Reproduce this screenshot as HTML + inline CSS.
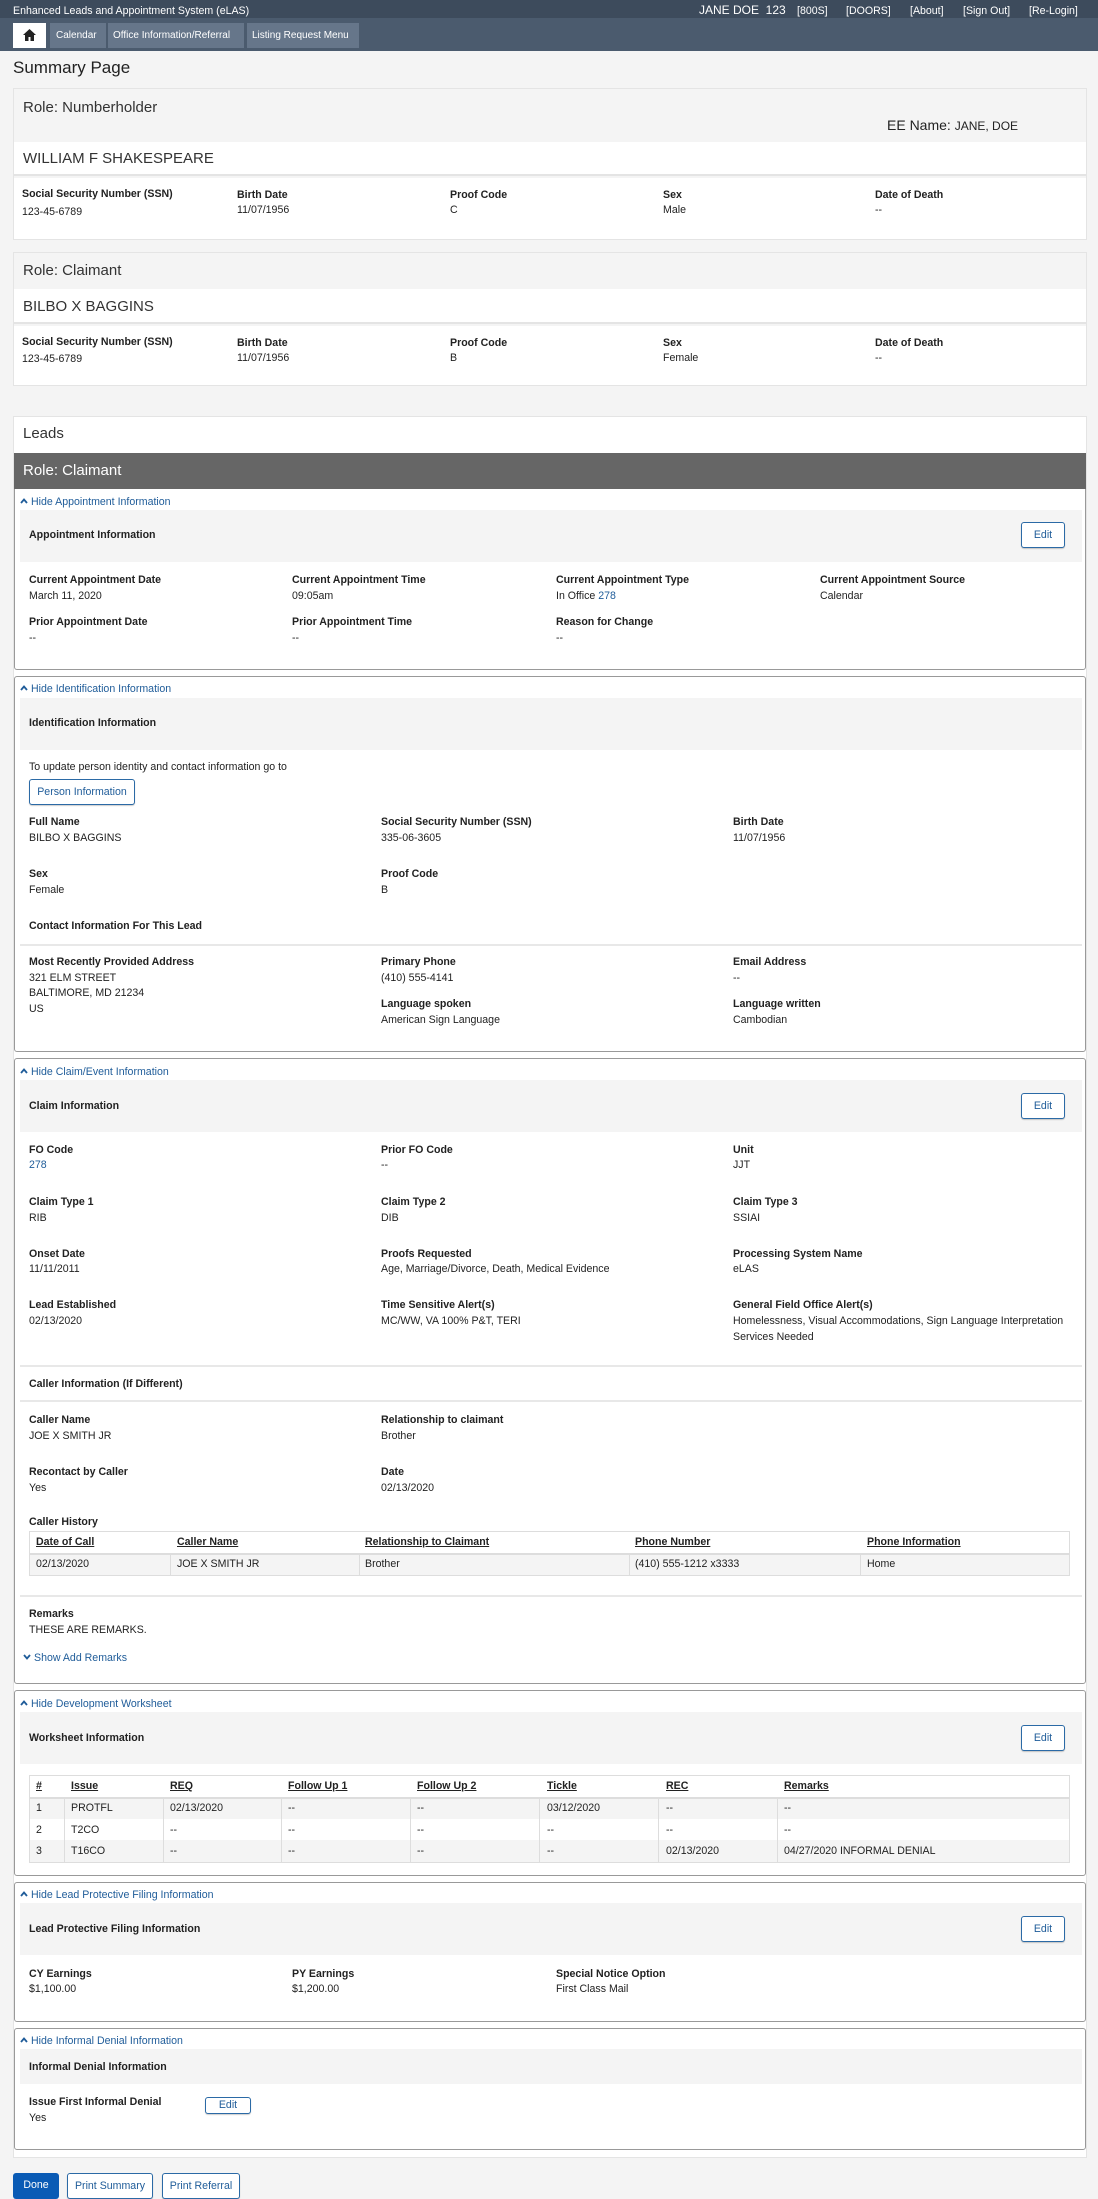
<!DOCTYPE html>
<html><head><meta charset="utf-8"><style>
*{margin:0;padding:0;box-sizing:border-box}
body{width:1098px;height:2195px;background:#f4f4f4;font-family:"Liberation Sans",Arial,sans-serif;color:#222;position:relative;overflow:hidden;font-size:10.6px}
.a{position:absolute;white-space:nowrap;line-height:14px}
.b{font-weight:bold}
.box{position:absolute;background:#fff}
.gh{position:absolute;background:#f4f4f4}
.lnk{color:#1f5c99}
.btn{position:absolute;border:1px solid #2b6aa6;border-radius:3px;background:#fff;color:#1f5c99;font-size:10.6px;text-align:center;box-shadow:0 1px 1px rgba(0,0,0,.2)}
.hl{position:absolute;height:2px;background:#e8e8e8}
.tab{position:absolute;background:#fff;border:1px solid #ddd}
.u{text-decoration:underline;font-weight:bold}
.vl{position:absolute;width:1px;background:#ddd}
.nv{position:absolute;color:#fff;font-size:10px;white-space:nowrap;line-height:14px}
.cu{display:inline-block;width:8px;height:6px;margin-right:3px;vertical-align:1px}
</style></head><body>
<svg width="0" height="0" style="position:absolute"><defs>
<symbol id="up" viewBox="0 0 8 6"><path d="M1 5L4 1.5L7 5" fill="none" stroke="#1f5c99" stroke-width="1.8"/></symbol>
<symbol id="dn" viewBox="0 0 8 6"><path d="M1 1L4 4.5L7 1" fill="none" stroke="#1f5c99" stroke-width="1.8"/></symbol>
</defs></svg>
<!-- top bars -->
<div style="position:absolute;left:0;top:0;width:1098px;height:18px;background:#3d4b5c"></div>
<div style="position:absolute;left:0;top:18px;width:1098px;height:33px;background:#4b5b6e"></div>
<div class="a" style="left:13px;top:4px;color:#fff;font-size:10.6px">Enhanced Leads and Appointment System (eLAS)</div>
<div class="a" style="left:699px;top:3px;color:#fff;font-size:12px">JANE DOE&nbsp; 123</div>
<div class="a" style="left:797px;top:4px;color:#fff">[800S]</div>
<div class="a" style="left:846px;top:4px;color:#fff">[DOORS]</div>
<div class="a" style="left:910px;top:4px;color:#fff">[About]</div>
<div class="a" style="left:963px;top:4px;color:#fff">[Sign Out]</div>
<div class="a" style="left:1029px;top:4px;color:#fff">[Re-Login]</div>
<div style="position:absolute;left:13px;top:23px;width:33px;height:25px;background:#fff"></div>
<svg style="position:absolute;left:23px;top:29px" width="13" height="12" viewBox="0 0 13 12"><path d="M6.5 0L0 6h2v6h3.5V8h2v4H11V6h2z" fill="#222"/></svg>
<div style="position:absolute;left:50px;top:23px;width:56px;height:25px;background:#66768a"></div>
<div style="position:absolute;left:108px;top:23px;width:136px;height:25px;background:#66768a"></div>
<div style="position:absolute;left:247px;top:23px;width:112px;height:25px;background:#66768a"></div>
<div class="nv" style="left:56px;top:29px">Calendar</div>
<div class="nv" style="left:113px;top:29px">Office Information/Referral</div>
<div class="nv" style="left:252px;top:29px">Listing Request Menu</div>

<div class="a" style="left:13px;top:57px;font-size:17px;line-height:22px">Summary Page</div>

<!-- card 1 -->
<div style="position:absolute;left:13px;top:88px;width:1074px;height:152px;background:#f4f4f4;border:1px solid #e4e4e4"></div>
<div class="box" style="left:14px;top:142px;width:1072px;height:34px;border-bottom:2px solid #e4e4e4"></div>
<div class="box" style="left:14px;top:178px;width:1072px;height:61px"></div>
<div class="a" style="left:23px;top:99px;font-size:15px;line-height:18px;color:#333">Role: Numberholder</div>
<div class="a" style="left:887px;top:116px;font-size:14px;line-height:18px">EE Name: <span style="font-size:12px">JANE, DOE</span></div>
<div class="a" style="left:23px;top:150px;font-size:15px;line-height:18px;color:#333">WILLIAM F SHAKESPEARE</div>
<div class="a b" style="left:22px;top:187px">Social Security Number (SSN)</div>
<div class="a" style="left:22px;top:205px">123-45-6789</div>
<div class="a b" style="left:237px;top:188px">Birth Date</div><div class="a" style="left:237px;top:203px">11/07/1956</div>
<div class="a b" style="left:450px;top:188px">Proof Code</div><div class="a" style="left:450px;top:203px">C</div>
<div class="a b" style="left:663px;top:188px">Sex</div><div class="a" style="left:663px;top:203px">Male</div>
<div class="a b" style="left:875px;top:188px">Date of Death</div><div class="a" style="left:875px;top:203px">--</div>

<!-- card 2 -->
<div style="position:absolute;left:13px;top:252px;width:1074px;height:134px;background:#f4f4f4;border:1px solid #e4e4e4"></div>
<div class="box" style="left:14px;top:289px;width:1072px;height:35px;border-bottom:2px solid #e4e4e4"></div>
<div class="box" style="left:14px;top:326px;width:1072px;height:59px"></div>
<div class="a" style="left:23px;top:262px;font-size:15px;line-height:18px;color:#333">Role: Claimant</div>
<div class="a" style="left:23px;top:298px;font-size:15px;line-height:18px;color:#333">BILBO X BAGGINS</div>
<div class="a b" style="left:22px;top:335px">Social Security Number (SSN)</div>
<div class="a" style="left:22px;top:352px">123-45-6789</div>
<div class="a b" style="left:237px;top:336px">Birth Date</div><div class="a" style="left:237px;top:351px">11/07/1956</div>
<div class="a b" style="left:450px;top:336px">Proof Code</div><div class="a" style="left:450px;top:351px">B</div>
<div class="a b" style="left:663px;top:336px">Sex</div><div class="a" style="left:663px;top:351px">Female</div>
<div class="a b" style="left:875px;top:336px">Date of Death</div><div class="a" style="left:875px;top:351px">--</div>

<!-- Leads card -->
<div style="position:absolute;left:13px;top:416px;width:1074px;height:1742px;background:#fff;border:1px solid #e4e4e4"></div>
<div class="a" style="left:23px;top:425px;font-size:15px;line-height:18px;color:#333">Leads</div>
<div style="position:absolute;left:14px;top:453px;width:1072px;height:36px;background:#666"></div>
<div class="a" style="left:23px;top:462px;font-size:15px;line-height:18px;color:#fff">Role: Claimant</div>

<!-- Appointment box -->
<div class="box" style="left:14px;top:489px;width:1072px;height:181px;border:1px solid #999;border-top:none;border-radius:0 0 3px 3px"></div>
<div class="a lnk" style="left:20px;top:495px"><svg class="cu"><use href="#up"/></svg>Hide Appointment Information</div>
<div class="gh" style="left:20px;top:510px;width:1062px;height:52px"></div>
<div class="a b" style="left:29px;top:528px">Appointment Information</div>
<div class="btn" style="left:1021px;top:522px;width:44px;height:26px;line-height:24px">Edit</div>
<div class="a b" style="left:29px;top:573px">Current Appointment Date</div><div class="a" style="left:29px;top:589px">March 11, 2020</div>
<div class="a b" style="left:292px;top:573px">Current Appointment Time</div><div class="a" style="left:292px;top:589px">09:05am</div>
<div class="a b" style="left:556px;top:573px">Current Appointment Type</div><div class="a" style="left:556px;top:589px">In Office <span class="lnk">278</span></div>
<div class="a b" style="left:820px;top:573px">Current Appointment Source</div><div class="a" style="left:820px;top:589px">Calendar</div>
<div class="a b" style="left:29px;top:615px">Prior Appointment Date</div><div class="a" style="left:29px;top:631px">--</div>
<div class="a b" style="left:292px;top:615px">Prior Appointment Time</div><div class="a" style="left:292px;top:631px">--</div>
<div class="a b" style="left:556px;top:615px">Reason for Change</div><div class="a" style="left:556px;top:631px">--</div>

<!-- Identification box -->
<div class="box" style="left:14px;top:676px;width:1072px;height:376px;border:1px solid #999;border-radius:3px"></div>
<div class="a lnk" style="left:20px;top:682px"><svg class="cu"><use href="#up"/></svg>Hide Identification Information</div>
<div class="gh" style="left:20px;top:698px;width:1062px;height:52px"></div>
<div class="a b" style="left:29px;top:716px">Identification Information</div>
<div class="a" style="left:29px;top:760px">To update person identity and contact information go to</div>
<div class="btn" style="left:29px;top:779px;width:106px;height:26px;line-height:24px">Person Information</div>
<div class="a b" style="left:29px;top:815px">Full Name</div><div class="a" style="left:29px;top:831px">BILBO X BAGGINS</div>
<div class="a b" style="left:381px;top:815px">Social Security Number (SSN)</div><div class="a" style="left:381px;top:831px">335-06-3605</div>
<div class="a b" style="left:733px;top:815px">Birth Date</div><div class="a" style="left:733px;top:831px">11/07/1956</div>
<div class="a b" style="left:29px;top:867px">Sex</div><div class="a" style="left:29px;top:883px">Female</div>
<div class="a b" style="left:381px;top:867px">Proof Code</div><div class="a" style="left:381px;top:883px">B</div>
<div class="a b" style="left:29px;top:919px">Contact Information For This Lead</div>
<div class="hl" style="left:20px;top:944px;width:1062px"></div>
<div class="a b" style="left:29px;top:955px">Most Recently Provided Address</div>
<div class="a" style="left:29px;top:971px">321 ELM STREET</div>
<div class="a" style="left:29px;top:986px">BALTIMORE, MD 21234</div>
<div class="a" style="left:29px;top:1002px">US</div>
<div class="a b" style="left:381px;top:955px">Primary Phone</div><div class="a" style="left:381px;top:971px">(410) 555-4141</div>
<div class="a b" style="left:733px;top:955px">Email Address</div><div class="a" style="left:733px;top:971px">--</div>
<div class="a b" style="left:381px;top:997px">Language spoken</div><div class="a" style="left:381px;top:1013px">American Sign Language</div>
<div class="a b" style="left:733px;top:997px">Language written</div><div class="a" style="left:733px;top:1013px">Cambodian</div>

<!-- Claim box -->
<div class="box" style="left:14px;top:1058px;width:1072px;height:626px;border:1px solid #999;border-radius:3px"></div>
<div class="a lnk" style="left:20px;top:1065px"><svg class="cu"><use href="#up"/></svg>Hide Claim/Event Information</div>
<div class="gh" style="left:20px;top:1080px;width:1062px;height:52px"></div>
<div class="a b" style="left:29px;top:1099px">Claim Information</div>
<div class="btn" style="left:1021px;top:1093px;width:44px;height:26px;line-height:24px">Edit</div>
<div class="a b" style="left:29px;top:1143px">FO Code</div><div class="a lnk" style="left:29px;top:1158px">278</div>
<div class="a b" style="left:381px;top:1143px">Prior FO Code</div><div class="a" style="left:381px;top:1158px">--</div>
<div class="a b" style="left:733px;top:1143px">Unit</div><div class="a" style="left:733px;top:1158px">JJT</div>
<div class="a b" style="left:29px;top:1195px">Claim Type 1</div><div class="a" style="left:29px;top:1211px">RIB</div>
<div class="a b" style="left:381px;top:1195px">Claim Type 2</div><div class="a" style="left:381px;top:1211px">DIB</div>
<div class="a b" style="left:733px;top:1195px">Claim Type 3</div><div class="a" style="left:733px;top:1211px">SSIAI</div>
<div class="a b" style="left:29px;top:1247px">Onset Date</div><div class="a" style="left:29px;top:1262px">11/11/2011</div>
<div class="a b" style="left:381px;top:1247px">Proofs Requested</div><div class="a" style="left:381px;top:1262px">Age, Marriage/Divorce, Death, Medical Evidence</div>
<div class="a b" style="left:733px;top:1247px">Processing System Name</div><div class="a" style="left:733px;top:1262px">eLAS</div>
<div class="a b" style="left:29px;top:1298px">Lead Established</div><div class="a" style="left:29px;top:1314px">02/13/2020</div>
<div class="a b" style="left:381px;top:1298px">Time Sensitive Alert(s)</div><div class="a" style="left:381px;top:1314px">MC/WW, VA 100% P&amp;T, TERI</div>
<div class="a b" style="left:733px;top:1298px">General Field Office Alert(s)</div>
<div class="a" style="left:733px;top:1314px">Homelessness, Visual Accommodations, Sign Language Interpretation</div>
<div class="a" style="left:733px;top:1330px">Services Needed</div>
<div class="hl" style="left:20px;top:1365px;width:1062px"></div>
<div class="a b" style="left:29px;top:1377px">Caller Information (If Different)</div>
<div class="hl" style="left:20px;top:1400px;width:1062px"></div>
<div class="a b" style="left:29px;top:1413px">Caller Name</div><div class="a" style="left:29px;top:1429px">JOE X SMITH JR</div>
<div class="a b" style="left:381px;top:1413px">Relationship to claimant</div><div class="a" style="left:381px;top:1429px">Brother</div>
<div class="a b" style="left:29px;top:1465px">Recontact by Caller</div><div class="a" style="left:29px;top:1481px">Yes</div>
<div class="a b" style="left:381px;top:1465px">Date</div><div class="a" style="left:381px;top:1481px">02/13/2020</div>
<div class="a b" style="left:29px;top:1515px">Caller History</div>
<div class="tab" style="left:29px;top:1531px;width:1041px;height:45px"></div>
<div style="position:absolute;left:30px;top:1553px;width:1039px;height:22px;background:#f4f4f4;border-top:2px solid #ddd"></div>
<div class="vl" style="left:170px;top:1554px;height:21px"></div><div class="vl" style="left:359px;top:1554px;height:21px"></div><div class="vl" style="left:629px;top:1554px;height:21px"></div><div class="vl" style="left:860px;top:1554px;height:21px"></div>
<div class="a u" style="left:36px;top:1535px">Date of Call</div>
<div class="a u" style="left:177px;top:1535px">Caller Name</div>
<div class="a u" style="left:365px;top:1535px">Relationship to Claimant</div>
<div class="a u" style="left:635px;top:1535px">Phone Number</div>
<div class="a u" style="left:867px;top:1535px">Phone Information</div>
<div class="a" style="left:36px;top:1557px">02/13/2020</div>
<div class="a" style="left:177px;top:1557px">JOE X SMITH JR</div>
<div class="a" style="left:365px;top:1557px">Brother</div>
<div class="a" style="left:635px;top:1557px">(410) 555-1212 x3333</div>
<div class="a" style="left:867px;top:1557px">Home</div>
<div class="hl" style="left:20px;top:1595px;width:1062px"></div>
<div class="a b" style="left:29px;top:1607px">Remarks</div>
<div class="a" style="left:29px;top:1623px">THESE ARE REMARKS.</div>
<div class="a lnk" style="left:23px;top:1651px"><svg class="cu"><use href="#dn"/></svg>Show Add Remarks</div>

<!-- Development box -->
<div class="box" style="left:14px;top:1690px;width:1072px;height:186px;border:1px solid #999;border-radius:3px"></div>
<div class="a lnk" style="left:20px;top:1697px"><svg class="cu"><use href="#up"/></svg>Hide Development Worksheet</div>
<div class="gh" style="left:20px;top:1712px;width:1062px;height:52px"></div>
<div class="a b" style="left:29px;top:1731px">Worksheet Information</div>
<div class="btn" style="left:1021px;top:1725px;width:44px;height:26px;line-height:24px">Edit</div>
<div class="tab" style="left:29px;top:1775px;width:1041px;height:88px"></div>
<div style="position:absolute;left:30px;top:1797px;width:1039px;height:22px;background:#f4f4f4;border-top:2px solid #ddd"></div>
<div style="position:absolute;left:30px;top:1840px;width:1039px;height:22px;background:#f4f4f4"></div>
<div class="vl" style="left:64px;top:1798px;height:64px"></div><div class="vl" style="left:163px;top:1798px;height:64px"></div><div class="vl" style="left:281px;top:1798px;height:64px"></div><div class="vl" style="left:410px;top:1798px;height:64px"></div><div class="vl" style="left:539px;top:1798px;height:64px"></div><div class="vl" style="left:658px;top:1798px;height:64px"></div><div class="vl" style="left:777px;top:1798px;height:64px"></div>
<div class="a u" style="left:36px;top:1779px">#</div>
<div class="a u" style="left:71px;top:1779px">Issue</div>
<div class="a u" style="left:170px;top:1779px">REQ</div>
<div class="a u" style="left:288px;top:1779px">Follow Up 1</div>
<div class="a u" style="left:417px;top:1779px">Follow Up 2</div>
<div class="a u" style="left:547px;top:1779px">Tickle</div>
<div class="a u" style="left:666px;top:1779px">REC</div>
<div class="a u" style="left:784px;top:1779px">Remarks</div>
<div class="a" style="left:36px;top:1801px">1</div><div class="a" style="left:71px;top:1801px">PROTFL</div><div class="a" style="left:170px;top:1801px">02/13/2020</div><div class="a" style="left:288px;top:1801px">--</div><div class="a" style="left:417px;top:1801px">--</div><div class="a" style="left:547px;top:1801px">03/12/2020</div><div class="a" style="left:666px;top:1801px">--</div><div class="a" style="left:784px;top:1801px">--</div>
<div class="a" style="left:36px;top:1823px">2</div><div class="a" style="left:71px;top:1823px">T2CO</div><div class="a" style="left:170px;top:1823px">--</div><div class="a" style="left:288px;top:1823px">--</div><div class="a" style="left:417px;top:1823px">--</div><div class="a" style="left:547px;top:1823px">--</div><div class="a" style="left:666px;top:1823px">--</div><div class="a" style="left:784px;top:1823px">--</div>
<div class="a" style="left:36px;top:1844px">3</div><div class="a" style="left:71px;top:1844px">T16CO</div><div class="a" style="left:170px;top:1844px">--</div><div class="a" style="left:288px;top:1844px">--</div><div class="a" style="left:417px;top:1844px">--</div><div class="a" style="left:547px;top:1844px">--</div><div class="a" style="left:666px;top:1844px">02/13/2020</div><div class="a" style="left:784px;top:1844px">04/27/2020 INFORMAL DENIAL</div>

<!-- Lead Protective Filing -->
<div class="box" style="left:14px;top:1882px;width:1072px;height:140px;border:1px solid #999;border-radius:3px"></div>
<div class="a lnk" style="left:20px;top:1888px"><svg class="cu"><use href="#up"/></svg>Hide Lead Protective Filing Information</div>
<div class="gh" style="left:20px;top:1903px;width:1062px;height:52px"></div>
<div class="a b" style="left:29px;top:1922px">Lead Protective Filing Information</div>
<div class="btn" style="left:1021px;top:1916px;width:44px;height:26px;line-height:24px">Edit</div>
<div class="a b" style="left:29px;top:1967px">CY Earnings</div><div class="a" style="left:29px;top:1982px">$1,100.00</div>
<div class="a b" style="left:292px;top:1967px">PY Earnings</div><div class="a" style="left:292px;top:1982px">$1,200.00</div>
<div class="a b" style="left:556px;top:1967px">Special Notice Option</div><div class="a" style="left:556px;top:1982px">First Class Mail</div>

<!-- Informal Denial -->
<div class="box" style="left:14px;top:2028px;width:1072px;height:122px;border:1px solid #999;border-radius:3px"></div>
<div class="a lnk" style="left:20px;top:2034px"><svg class="cu"><use href="#up"/></svg>Hide Informal Denial Information</div>
<div class="gh" style="left:20px;top:2049px;width:1062px;height:35px"></div>
<div class="a b" style="left:29px;top:2060px">Informal Denial Information</div>
<div class="a b" style="left:29px;top:2095px">Issue First Informal Denial</div>
<div class="a" style="left:29px;top:2111px">Yes</div>
<div class="btn" style="left:205px;top:2097px;width:46px;height:17px;line-height:15px">Edit</div>

<!-- bottom buttons -->
<div style="position:absolute;left:13px;top:2173px;width:46px;height:26px;background:#0a5bb5;border-radius:3px;color:#fff;line-height:24px;text-align:center;font-size:10.6px">Done</div>
<div class="btn" style="left:67px;top:2173px;width:86px;height:26px;line-height:24px">Print Summary</div>
<div class="btn" style="left:162px;top:2173px;width:78px;height:26px;line-height:24px">Print Referral</div>
</body></html>
